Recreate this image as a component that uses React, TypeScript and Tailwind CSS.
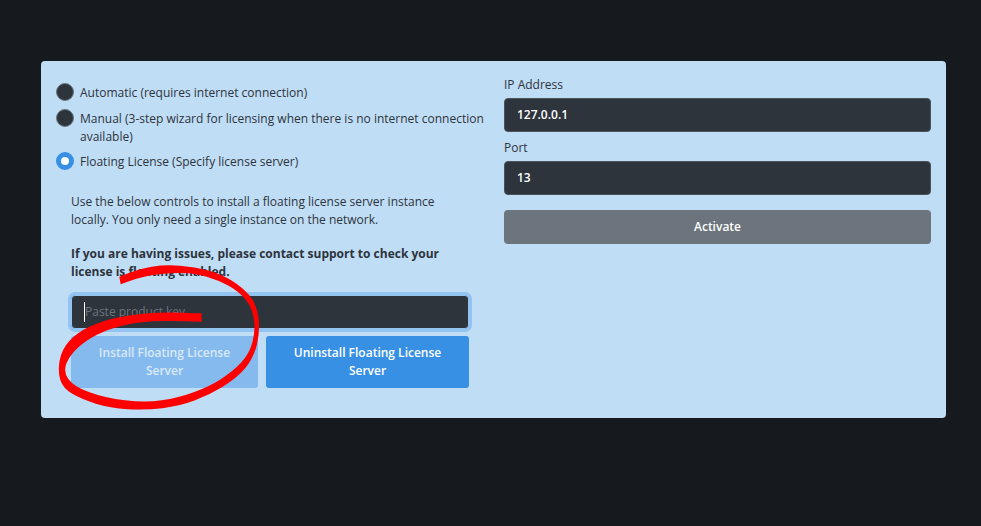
import React from "react";

// outline of the hand-drawn circle, traced from the crop (3x, origin 55,260)
const scribble: [number, number][] = [
  [250, 26], [330, 14], [420, 20], [500, 43], [562, 82], [604, 130], [616, 210], [596, 295],
  [545, 355], [462, 405], [375, 438], [270, 451], [165, 444], [80, 418], [24, 385], [8, 335],
  [20, 268], [66, 218], [140, 183], [230, 163], [330, 156], [440, 160],
];
const scribbleBack: [number, number][] = [
  [330, 182], [240, 187], [160, 207], [92, 242], [45, 285], [24, 335], [57, 380], [150, 414],
  [270, 428], [370, 414], [462, 380], [533, 335], [583, 282], [602, 210], [591, 142], [552, 95],
  [490, 60], [420, 40], [340, 38], [260, 50],
];

const smooth = (from: [number, number], pts: [number, number][], to: [number, number]) => {
  let d = `M${from[0]} ${from[1]}`;
  pts.forEach((p, i) => {
    const n = pts[i + 1] ?? to;
    d += ` Q${p[0]} ${p[1]} ${(p[0] + n[0]) / 2} ${(p[1] + n[1]) / 2}`;
  });
  return d + ` L${to[0]} ${to[1]}`;
};

const scribblePath =
  smooth([193, 50], scribble, [440, 160]) +
  " L440 185 " +
  smooth([440, 185], scribbleBack, [197, 73]).replace("M440 185", "L440 185") +
  " Z";

const Radio: React.FC<{ checked?: boolean; label: string }> = ({ checked, label }) => (
  <div className="flex items-start">
    {checked ? (
      <span className="mr-[6px] h-[18px] w-[18px] shrink-0 rounded-full border-[5px] border-[#3790e4] bg-white" />
    ) : (
      <span className="mr-[6px] h-[18px] w-[18px] shrink-0 rounded-full border border-[#6c757d] bg-[#2d343c]" />
    )}
    <span className="-mb-px pt-px text-[12px] leading-[18px] text-[#2d343c]">{label}</span>
  </div>
);

const Field: React.FC<{ label: string; value: string }> = ({ label, value }) => (
  <div>
    <div className="mb-[4px] text-[12px] leading-[18px] text-[#2d343c]">{label}</div>
    <div className="flex h-[34px] items-center rounded-[4px] border border-[#4a535c] bg-[#2d343c] px-3 text-[12px] font-semibold text-white">
      {value}
    </div>
  </div>
);

export default function App() {
  return (
    <div className="relative h-screen overflow-hidden bg-[#16191d] pl-[41px] pt-[61px] font-['Open_Sans',sans-serif]">
      <div className="flex h-[357px] w-[905px] rounded-[4px] bg-[#c0ddf6] pl-[15px] pt-[22px]">
        {/* licensing options */}
        <div className="w-[433px] shrink-0">
          <div className="flex flex-col gap-[8px]">
            <Radio label="Automatic (requires internet connection)" />
            <Radio label="Manual (3-step wizard for licensing when there is no internet connection available)" />
            <div className="-mt-px">
              <Radio checked label="Floating License (Specify license server)" />
            </div>
          </div>
          <div className="px-[15px] pt-[23px]">
            <p className="text-[12px] leading-[18px] text-[#2d343c]">
              Use the below controls to install a floating license server instance locally. You only need a single instance on the network.
            </p>
            <p className="mt-[16px] text-[12px] font-bold leading-[18px] text-[#2d343c]">
              If you are having issues, please contact support to check your license is floating enabled.
            </p>
            <div className="mt-[14px] flex h-[34px] w-[398px] items-center rounded-[4px] border border-[#93c3f0] bg-[#2d343c] pl-[12px] shadow-[0_0_0_3px_#93c3f0]">
              <span className="h-[20px] w-px bg-white" />
              <span className="text-[12px] text-[#6c757d]">Paste product key</span>
            </div>
            <div className="mt-[7px] flex w-[398px] gap-[8px]">
              <button className="h-[52px] w-[187px] rounded-[3px] bg-[#85baee] px-3 text-[12px] font-semibold leading-[18px] text-[#d9e9f9]">
                Install Floating License Server
              </button>
              <button className="h-[52px] w-[203px] rounded-[3px] bg-[#3790e4] px-3 text-[12px] font-semibold leading-[18px] text-white">
                Uninstall Floating License Server
              </button>
            </div>
          </div>
        </div>
        {/* server settings */}
        <div className="ml-[15px] -mt-[7px] w-[427px]">
          <div className="flex flex-col gap-[7px]">
            <Field label="IP Address" value="127.0.0.1" />
            <Field label="Port" value="13" />
          </div>
          <button className="mt-[15px] h-[34px] w-full rounded-[4px] bg-[#6c747d] text-[12px] font-semibold text-white">
            Activate
          </button>
        </div>
      </div>
      {/* red scribble */}
      <svg className="pointer-events-none absolute left-0 top-0" width="981" height="526" viewBox="0 0 981 526">
        <g transform="translate(55 260) scale(0.3333)">
          <path d={scribblePath} fill="#fe0000" />
        </g>
      </svg>
    </div>
  );
}
